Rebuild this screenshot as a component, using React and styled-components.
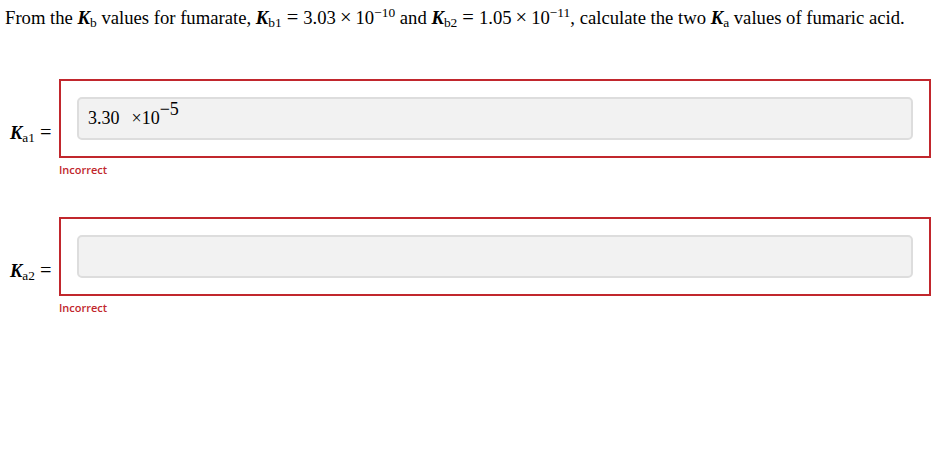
import React from "react";
import styled, { createGlobalStyle } from "styled-components";

const GlobalStyle = createGlobalStyle`
  html, body {
    margin: 0;
    padding: 0;
    background: #fff;
  }
`;

const Page = styled.div`
  width: 938px;
  height: 470px;
  box-sizing: border-box;
  padding: 7px 0 0 5px;
  font-family: "Liberation Serif", "Times New Roman", serif;
  color: #000;
`;

const Question = styled.p`
  margin: 0;
  font-size: 18.67px;
  line-height: 22px;
  white-space: nowrap;
`;

const K = styled.i`
  font-weight: bold;
`;

const Sub = styled.sub`
  font-size: 0.72em;
  vertical-align: -0.25em;
  line-height: 0;
`;

const Sup = styled.sup`
  font-size: 0.72em;
  vertical-align: 0.5em;
  line-height: 0;
`;

// binary operators and relations get math-style spacing
const Op = styled.span`
  font-size: 1.1em;
  line-height: 0;
  margin: 0 ${(p) => (p.$rel ? 5 : 4)}px;
`;

const Answers = styled.div`
  display: flex;
  flex-direction: column;
  gap: 40px;
  margin-top: 50px;
`;

const Row = styled.div`
  display: flex;
  align-items: flex-start;
`;

const Label = styled.div`
  width: 49px;
  padding: 43px 0 0 5px;
  font-size: 18.5px;
  line-height: 22px;
  white-space: nowrap;
`;

const Field = styled.div`
  flex: 1;
  margin-right: 7px;
`;

const Frame = styled.div`
  border: 2px solid #c1272d;
  padding: 16px;
`;

const Input = styled.div`
  height: 39px;
  box-sizing: content-box;
  border: 2px solid #dddddd;
  border-radius: 5px;
  background: #f2f2f2;
  padding: 0 9px;
  display: flex;
  align-items: center;
  font-family: "Liberation Serif", "Times New Roman", serif;
  font-size: 18px;
`;

const Power = styled.span`
  margin-left: 12px;
`;

const Exp = styled.sup`
  font-size: 1em;
  vertical-align: 0.5em;
  line-height: 0;
`;

const Feedback = styled.div`
  margin-top: 4px;
  font-family: "Open Sans", "Lato", sans-serif;
  font-size: 11px;
  font-weight: 600;
  color: #c1272d;
  line-height: 15px;
`;

function Kval({ sub }) {
  return (
    <>
      <K>K</K>
      <Sub>{sub}</Sub>
    </>
  );
}

function AnswerRow({ sub, value }) {
  return (
    <Row>
      <Label>
        <Kval sub={sub} />
        <Op $rel>=</Op>
      </Label>
      <Field>
        <Frame>
          <Input>
            {value && (
              <>
                {value.mantissa}
                <Power>
                  ×10<Exp>{value.exp}</Exp>
                </Power>
              </>
            )}
          </Input>
        </Frame>
        <Feedback>Incorrect</Feedback>
      </Field>
    </Row>
  );
}

export default function App() {
  return (
    <>
      <GlobalStyle />
      <Page>
        <Question>
          From the <Kval sub="b" /> values for fumarate, <Kval sub="b1" />
          <Op $rel>=</Op>3.03<Op>×</Op>10<Sup>−10</Sup> and <Kval sub="b2" />
          <Op $rel>=</Op>1.05<Op>×</Op>10<Sup>−11</Sup>, calculate the two{" "}
          <Kval sub="a" /> values of fumaric acid.
        </Question>
        <Answers>
          <AnswerRow sub="a1" value={{ mantissa: "3.30", exp: "−5" }} />
          <AnswerRow sub="a2" />
        </Answers>
      </Page>
    </>
  );
}
